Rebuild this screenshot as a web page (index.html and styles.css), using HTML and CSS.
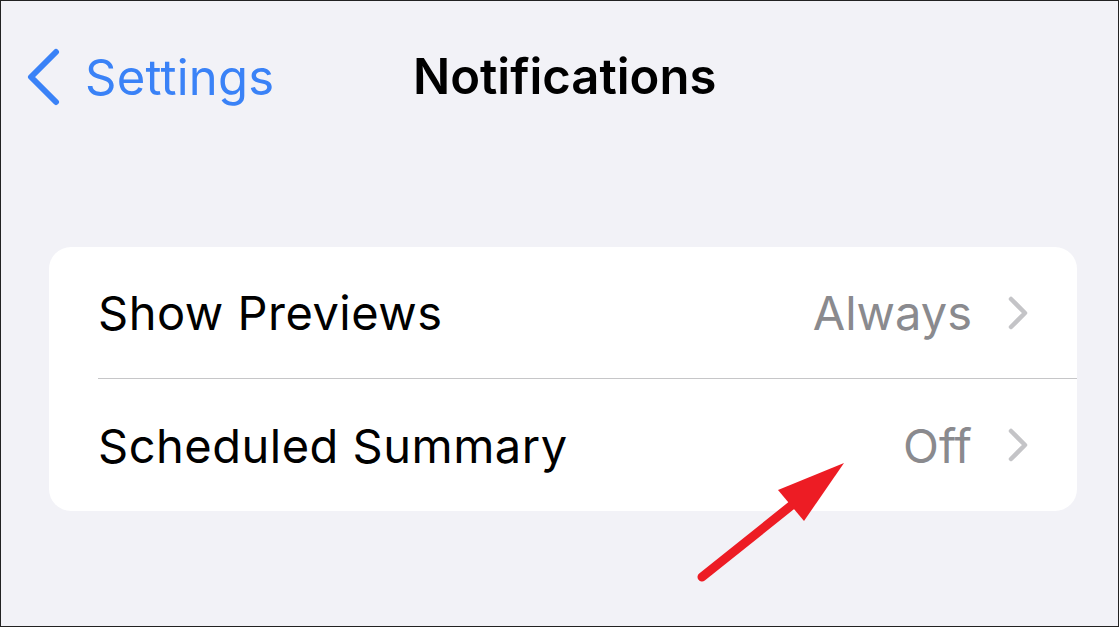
FILE: index.html
```html
<!DOCTYPE html>
<html lang="en">
<head>
    <meta charset="UTF-8">
    <meta name="viewport" content="width=device-width, initial-scale=1.0">
    <title>Notifications</title>
    <link rel="stylesheet" href="styles.css">
</head>
<body>
    <div class="screen">
        <div class="nav-bar">
            <a class="back-link" href="#">
                <svg class="back-chevron" width="36" height="58" viewBox="0 0 36 58">
                    <polyline points="30,4 5,29 30,54" fill="none" stroke="#3a82f7" stroke-width="6" stroke-linecap="round" stroke-linejoin="round"/>
                </svg>
                <span>Settings</span>
            </a>
            <div class="nav-title">Notifications</div>
        </div>

        <div class="group">
            <div class="row">
                <span class="row-label">Show Previews</span>
                <span class="row-value">Always</span>
                <svg class="disclosure" width="24" height="38" viewBox="0 0 24 38">
                    <polyline points="5,5 19,19 5,33" fill="none" stroke="#c4c4c7" stroke-width="4.5" stroke-linecap="round" stroke-linejoin="round"/>
                </svg>
            </div>
            <div class="row">
                <span class="row-label">Scheduled Summary</span>
                <span class="row-value">Off</span>
                <svg class="disclosure" width="24" height="38" viewBox="0 0 24 38">
                    <polyline points="5,5 19,19 5,33" fill="none" stroke="#c4c4c7" stroke-width="4.5" stroke-linecap="round" stroke-linejoin="round"/>
                </svg>
            </div>
        </div>

        <!-- red pointer arrow -->
        <svg class="pointer" width="180" height="150" viewBox="0 0 180 150">
            <line x1="22" y1="136" x2="112" y2="64" stroke="#ed1c24" stroke-width="9" stroke-linecap="round"/>
            <polygon points="164,22 98,49 124,80" fill="#ed1c24"/>
        </svg>
    </div>
</body>
</html>
```

FILE: styles.css
```css
body {
    margin: 0;
    padding: 0;
    font-family: Inter, "Noto Sans", sans-serif;
    background-color: #f2f2f7;
}
.screen {
    position: relative;
    width: 1119px;
    height: 627px;
    box-sizing: border-box;
    border: 1px solid #222;
    background-color: #f2f2f7;
    overflow: hidden;
}
.nav-bar {
    position: relative;
    display: flex;
    align-items: center;
    padding-left: 25px;
    padding-bottom: 94px;
    box-sizing: border-box;
    height: 246px;
}
.back-link {
    display: flex;
    align-items: center;
    gap: 23px;
    color: #3a82f7;
    text-decoration: none;
    font-size: 49px;
    letter-spacing: 0.2px;
}
.nav-title {
    position: absolute;
    left: 412px;
    top: 46px;
    font-size: 49px;
    font-weight: 600;
    color: #000;
}
.group {
    margin: 0 41px 0 48px;
    background: #fff;
    border-radius: 22px;
    overflow: hidden;
}
.row {
    display: flex;
    align-items: center;
    height: 131px;
    margin-left: 49px;
    padding-right: 47px;
    border-bottom: 1px solid #c6c6c8;
}
.row:last-child {
    border-bottom: none;
    height: 132px;
}
.row-label {
    flex: 1;
    font-size: 47px;
    letter-spacing: 0.5px;
    color: #000;
}
.row-value {
    font-size: 47px;
    color: #8a8a8e;
    margin-right: 34px;
}
.pointer {
    position: absolute;
    left: 679px;
    top: 440px;
}
```
